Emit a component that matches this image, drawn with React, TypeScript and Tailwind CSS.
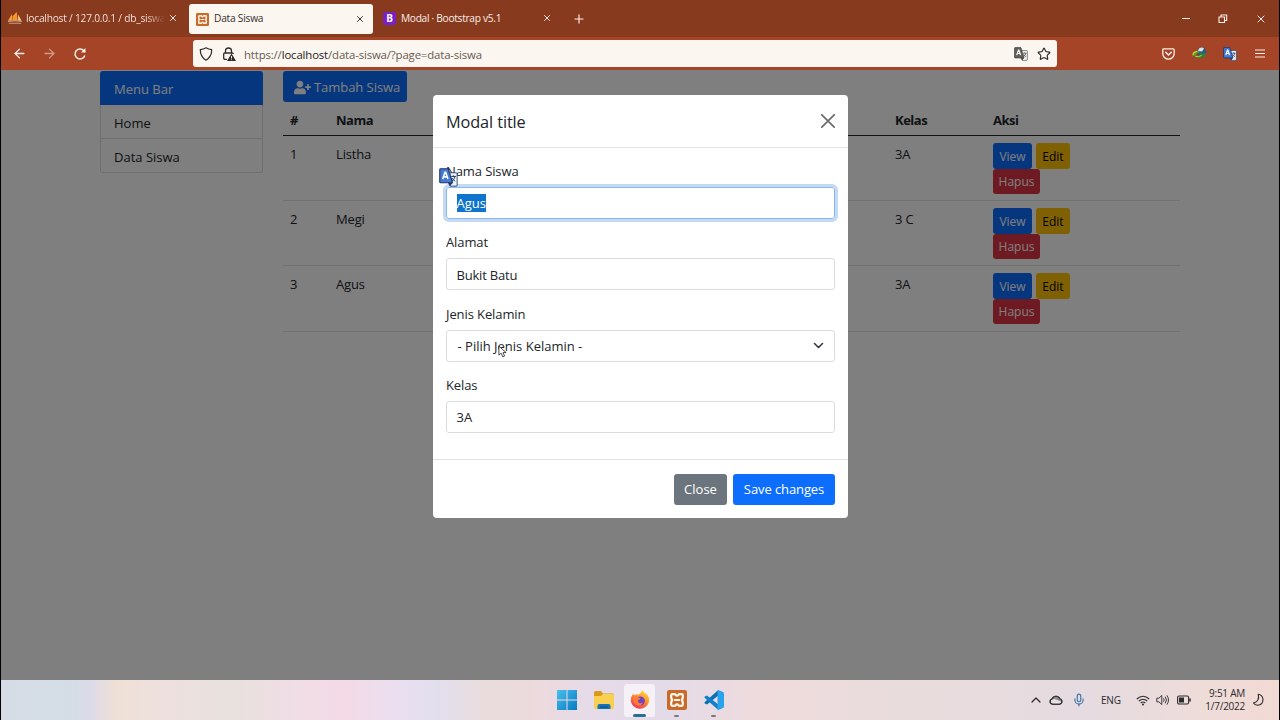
import React from 'react';
import { ArrowLeft, ArrowRight, ChevronUp, Mic, Minus, Plus, Star, X } from 'lucide-react';
import { FaUserPlus } from 'react-icons/fa';

const students = [
  { id: 1, name: 'Listha', kelas: '3A' },
  { id: 2, name: 'Megi', kelas: '3 C' },
  { id: 3, name: 'Agus', kelas: '3A' },
];

const XamppIcon: React.FC<{ className?: string }> = ({ className }) => (
  <svg viewBox="0 0 24 24" className={className} fill="none">
    <rect width="24" height="24" rx="2.5" fill="#c96a2b" />
    <path
      d="M6.5 5h2.7q1 0 1.2 1q1.6 1.6 3.2 0q.2-1 1.2-1h2.700q1.500 0 1.500 1.500v2.700q-1.800 2.800 0 5.600v2.700q0 1.500-1.500 1.500h-2.700q-1 0-1.200-1q-1.600-1.600-3.200 0q-.2 1-1.200 1h-2.700q-1.500 0-1.500-1.500v-2.700q1.800-2.800 0-5.600v-2.700q0-1.500 1.500-1.500z"
      stroke="#fff5e8"
      strokeWidth="2.700"
      strokeLinejoin="round"
    />
    <path d="M9 12h6" stroke="#fff5e8" strokeWidth="2.200" strokeLinecap="round" />
  </svg>
);

const TranslateIcon: React.FC<{ className?: string; main?: string; edge?: string }> = ({
  className,
  main = '#4479d4',
  edge = '#1c3566',
}) => (
  <svg viewBox="0 0 18 18" className={className} fill="none">
    <path d="M9 4.500h7.200q1 0 1 1v10.700q0 1-1 1h-5.700l-1.500-3z" fill="#eef1f4" stroke={edge} strokeWidth=".8" />
    <path d="M11.500 8h4.500M13.700 7v1M15.200 8q-.7 3-3 4.500M12.300 9.500q1 2 3 3" stroke={edge} strokeWidth=".9" />
    <path d="M1.500.8h7.300l4 13.200H1.500q-.8 0-.8-.8V1.600q0-.8.8-.8z" fill={main} stroke={edge} />
    <path d="M9 14l1.500 3.200l2.300-3.200z" fill={edge} />
    <path d="M3.500 10.500l2.200-6.500h.6l2.200 6.500M4.300 8.400h3.400" stroke="#fff" strokeWidth="1.500" />
  </svg>
);

const TabBar: React.FC = () => (
  <div className="flex h-[37px] shrink-0 items-center bg-[#883a1f] text-[#fbeee8]">
    <div className="flex w-[188px] items-center pl-[7px]">
      <svg viewBox="0 0 16 14" className="h-[14px] w-[14px] shrink-0">
        <path d="M0 10L4.500 2.500L5 10z" fill="#f3a13b" />
        <path d="M5.300 10V5L10 0L11 10z" fill="#f5952a" />
        <path d="M11.500 10V3L15.500 10z" fill="#f7c486" />
        <path d="M0 11q8-1.500 16 0M1 13h14" stroke="#d9b8a0" strokeWidth=".9" fill="none" />
      </svg>
      <span className="ml-1 w-[142px] whitespace-nowrap bg-linear-to-r from-[#fbeee8] from-85% to-[#883a1f] to-98% bg-clip-text text-[10.200px] tracking-[-0.230px] text-transparent">
        localhost / 127.0.0.1 / db_siswa
      </span>
      <X className="h-[10px] w-[10px] shrink-0" strokeWidth={2.300} />
    </div>
    <div className="mt-px flex h-[30px] w-[184px] items-center rounded-[3px] bg-[#fbf6f0] pl-[7px] pr-[8px] text-[#332f2d]">
      <XamppIcon className="h-[13px] w-[13px]" />
      <span className="ml-[5px] flex-1 text-[10.200px] tracking-[-0.230px]">Data Siswa</span>
      <X className="h-[10px] w-[10px]" strokeWidth={2.300} />
    </div>
    <div className="flex w-[186px] items-center pl-[10px] pr-[7px]">
      <span className="flex h-[13px] w-[13px] items-center justify-center rounded-[2px] bg-[#7b20c4] text-[10px] font-bold text-white">
        B
      </span>
      <span className="ml-[5px] flex-1 pt-px text-[10.200px] tracking-[-0.300px]">Modal · Bootstrap v5.1</span>
      <X className="h-[10px] w-[10px]" strokeWidth={2.300} />
    </div>
    <Plus className="ml-[13px] h-[14px] w-[14px]" strokeWidth={2} />
    <div className="ml-auto flex items-center gap-[27px] pr-[12px]">
      <svg viewBox="0 0 10 10" className="h-[10px] w-[10px]" stroke="currentColor">
        <path d="M1 4.500h8" />
      </svg>
      <svg viewBox="0 0 10 10" className="h-[10px] w-[10px]" fill="none" stroke="currentColor" strokeWidth="1.100">
        <path d="M1 3h5.500v5.500h-5.500zM3 3V1h5.700v5.500h-2.200" />
      </svg>
      <X className="h-[12px] w-[12px]" strokeWidth={2} />
    </div>
  </div>
);

const AddressBar: React.FC = () => (
  <div className="flex h-[33px] shrink-0 items-center bg-[#a54427] text-[#fbeee8]">
    <div className="flex w-[192px] items-center pl-[11px]">
      <ArrowLeft className="h-[15px] w-[15px]" strokeWidth={2.100} />
      <ArrowRight className="ml-[15px] h-[15px] w-[15px] opacity-50" strokeWidth={2.100} />
      <svg viewBox="0 0 14 14" className="ml-4 h-[14px] w-[14px]" fill="none" stroke="currentColor" strokeWidth="1.500">
        <path d="M11.800 8.500a5 5 0 1 1-.8-4.500l1 1" />
        <path d="M12.500 1v4.500h-4.500z" fill="currentColor" stroke="none" />
      </svg>
    </div>
    <div className="flex h-[27px] w-[864px] items-center rounded-[3px] bg-[#fbf6f0] pl-[6px] pr-[6px] text-[#2f2b29]">
      <svg viewBox="0 0 14 14" className="h-[14px] w-[14px]" fill="none" stroke="currentColor" strokeWidth="1.200">
        <path d="M7 .8Q9.500 2.300 12.700 2.600Q12.900 9.800 7 13.200Q1.100 9.800 1.300 2.600Q4.500 2.300 7 .8z" strokeLinejoin="round" />
      </svg>
      <svg viewBox="0 0 14 14" className="ml-[9px] h-[14px] w-[14px]" fill="none">
        <path d="M3.500 6V4a3 3 0 0 1 6 0v2M5 12.400H3q-1.300 0-1.300-1.300V7q0-1 1-1h7.500q1 0 1 1" stroke="currentColor" strokeWidth="1.300" />
        <path d="M9.500 6.500l4.500 7.500H5z" fill="currentColor" />
        <path d="M9.500 9v2.500M9.500 12.300v.8" stroke="#fff" strokeWidth=".9" />
      </svg>
      <span className="ml-[8px] flex-1 pt-[2px] text-[11.400px] tracking-[-0.150px] text-[#6a5a50]">
        https://<span className="text-[#1f1b19]">localhost</span>/data-siswa/?page=data-siswa
      </span>
      <TranslateIcon className="h-[14px] w-[14px]" main="#625f5c" edge="#4a4745" />
      <Star className="ml-[9px] h-[14px] w-[14px]" strokeWidth={2} />
    </div>
    <div className="ml-auto flex items-center pr-[14px]">
      <svg viewBox="0 0 13 12" className="h-[12px] w-[13px]" fill="none" stroke="currentColor" strokeWidth="1.300">
        <path d="M1.900.8h9.200q1.100 0 1.100 1.100v3.600a5.700 5.700 0 0 1-11.400 0V1.900Q.8.8 1.900.8z" />
        <path d="M3.700 4.300L6.500 7l2.800-2.700" strokeLinecap="round" strokeWidth="1.500" />
      </svg>
      <svg viewBox="0 0 15 13" className="ml-[17px] h-[13px] w-[15px]">
        <circle cx="9.700" cy="4.800" r="4.500" fill="#31597f" />
        <path d="M7 1.500Q10-.5 12 1.500L10 4.500L6 4z" fill="#d9e6e3" />
        <path d="M.5 9.500Q-.5 5 5.500 3.500l2.500 1.700q-5 1.300-4 3.300z" fill="#55a52b" />
        <path d="M1 7.800q0-2.600 4-3.500" stroke="#f2d53a" strokeWidth="1.100" fill="none" />
        <path d="M1 8.500q3 2.200 7.500-.3l-1.200-1.500l6.200-.7l-1.200 5l-1.500-1.300Q5.500 13.500 1 8.500z" fill="#228a30" />
        <path d="M3.500 9.500q3 1 6-1.200" stroke="#e8c83a" strokeWidth="1" fill="none" />
      </svg>
      <TranslateIcon className="ml-[16px] h-[14px] w-[14px]" />
      <svg viewBox="0 0 10 9" className="ml-[18px] h-[9px] w-[10px]" stroke="currentColor" strokeWidth="1.200">
        <path d="M0 1h10M0 4.500h10M0 8h10" />
      </svg>
    </div>
  </div>
);

const StudentPage: React.FC = () => (
  <div className="flex h-full bg-white pl-[99px] pr-[99px] pt-px text-[13px] leading-5 text-[#212529]">
    <div className="w-[163px] shrink-0">
      <div className="flex h-[34px] items-center rounded-t-[3px] bg-[#0d6efd] px-[14px] pt-[2px] text-white">Menu Bar</div>
      <div className="flex h-[34px] items-center border-x border-b border-[#dfdfdf] px-[13px] pt-[2px]">Home</div>
      <div className="flex h-[34px] items-center rounded-b-[3px] border-x border-b border-[#dfdfdf] px-[13px] pt-[2px]">
        Data Siswa
      </div>
    </div>
    <div className="ml-5 flex-1">
      <button className="flex h-[31px] w-[124px] items-center whitespace-nowrap rounded-[3px] bg-[#0d6efd] pl-[11px] pt-px tracking-[-0.050px] text-white">
        <FaUserPlus className="mr-[3px] h-[17px] w-[17px] shrink-0" />
        Tambah Siswa
      </button>
      <div className="flex h-[34px] items-center border-b border-[#212529] pt-[2px] font-bold tracking-[-0.500px]">
        <div className="w-[53px] pl-[7px]">#</div>
        <div className="w-[559px]">Nama</div>
        <div className="w-[98px]">Kelas</div>
        <div>Aksi</div>
      </div>
      {students.map((s) => (
        <div key={s.id} className="flex h-[65.200px] items-start border-b border-[#dee2e6] pt-[7px] tracking-[-0.150px]">
          <div className="w-[53px] pl-[7px] pt-px">{s.id}</div>
          <div className="w-[559px] pt-px">{s.name}</div>
          <div className="w-[98px] pt-px">{s.kelas}</div>
          <div className="flex w-[90px] flex-wrap gap-x-1 text-[12px] leading-[25px] tracking-normal">
            <button className="h-[25.500px] w-[39px] rounded-[3px] bg-[#0d6efd] pt-px text-white">View</button>
            <button className="h-[25.500px] w-[34px] rounded-[3px] bg-[#ffc107] pt-px text-black">Edit</button>
            <button className="h-[25.500px] w-[47px] rounded-[3px] bg-[#dc3545] text-white">Hapus</button>
          </div>
        </div>
      ))}
    </div>
  </div>
);

const Field: React.FC<{ label: string; children: React.ReactNode; focused?: boolean }> = ({ label, children, focused }) => (
  <div className="mb-[13.600px] flex flex-col gap-[6px]">
    <label className="leading-5 tracking-[-0.100px]">{label}</label>
    <div
      className={
        focused
          ? 'flex h-[31.800px] items-center rounded-[3px] border border-[#86b7fe] px-[9.500px] pt-px ring-[3px] ring-[#c5daf0]'
          : 'flex h-[31.800px] items-center rounded-[3px] border border-[#d9dde1] px-[9.500px] pt-[2px]'
      }
    >
      {children}
    </div>
  </div>
);

const StudentModal: React.FC = () => (
  <div className="absolute left-[432px] top-[25px] flex h-[423px] w-[415px] flex-col rounded-[4px] bg-white text-[13px] text-[#212529]">
    <div className="flex h-[52.500px] items-center justify-between border-b border-[#e3e6e9] px-[13px]">
      <h5 className="pt-[2px] text-[16.300px] tracking-[-0.100px]">Modal title</h5>
      <svg viewBox="0 0 14 14" className="h-[14px] w-[14px]" stroke="#6c6c6c" strokeWidth="1.700">
        <path d="M.8.800l12.400 12.400M13.200.800L.8 13.200" strokeLinecap="round" />
      </svg>
    </div>
    <div className="flex-1 px-[13px] pt-[13.500px]">
      <Field label="Nama Siswa" focused>
        <span className="bg-[#0f75cc] leading-[18px] text-white">Agus</span>
      </Field>
      <Field label="Alamat">
        <span className="tracking-[-0.200px]">Bukit Batu</span>
      </Field>
      <Field label="Jenis Kelamin">
        <span className="flex-1 pl-px">- Pilih Jenis Kelamin -</span>
        <svg viewBox="0 0 11 8" className="mb-px mr-px h-[8px] w-[11px]" fill="none" stroke="#343a40" strokeWidth="1.600">
          <path d="M1.500 1.500l4 4l4-4" strokeLinecap="round" strokeLinejoin="round" />
        </svg>
      </Field>
      <Field label="Kelas">3A</Field>
    </div>
    <div className="flex h-[59px] items-center justify-end gap-[6px] border-t border-[#dee2e6] pr-[13px]">
      <button className="h-[31px] w-[53px] rounded-[3px] bg-[#6c757d] pt-[2px] text-white">Close</button>
      <button className="h-[31px] w-[102px] rounded-[3px] bg-[#0d6efd] pt-[2px] tracking-[-0.100px] text-white">
        Save changes
      </button>
    </div>
    <TranslateIcon className="absolute left-[6px] top-[73px] h-[19px] w-[19px]" />
    <svg viewBox="0 0 10 14" className="absolute left-[65px] top-[250px] h-[13px] w-[9px]">
      <path d="M1 1v10l2.500-2.200L5.300 13l2-.9L5.600 8.200H9z" fill="#fff" stroke="#222" strokeWidth=".9" />
    </svg>
  </div>
);

const Taskbar: React.FC = () => (
  <div className="flex h-10 shrink-0 items-center bg-[linear-gradient(90deg,#d6dce6_0%,#d4dde5_5.5%,#dcdae8_7%,#efe0d6_9%,#ede0de_13%,#e8e1dd_18%,#f0dde6_23%,#f3dae6_27%,#eadff0_31%,#e2dfee_34%,#e9dcdc_38%,#ecdadd_42%,#e6dbe8_46%,#e4dbe8_52%,#efdbdc_60%,#e9dcdc_70%,#e5dbe0_85%,#efdcd8_95%,#f2d9d4_100%)]">
    <div className="ml-[550px] flex h-full items-center">
      <div className="flex w-[32px] justify-center">
        <svg viewBox="0 0 20 20" className="h-5 w-5">
          <defs>
            <linearGradient id="win" x1="0" y1="0" x2="1" y2="1">
              <stop stopColor="#48c0ea" />
              <stop offset="1" stopColor="#0879c4" />
            </linearGradient>
          </defs>
          <path d="M0 0h9.500v9.500H0zM10.500 0H20v9.500h-9.500zM0 10.500h9.500V20H0zM10.500 10.500H20V20h-9.500z" fill="url(#win)" />
        </svg>
      </div>
      <div className="ml-[5px] flex w-[32px] justify-center">
        <svg viewBox="0 0 20 18" className="h-[18px] w-5">
          <path d="M0 1.500Q0 0 1.500 0H7l2 2.500h9.500Q20 2.500 20 4v5H0z" fill="#d99a1c" />
          <path d="M0 5h7l2-2h10q1 0 1 1v13q0 1-1 1H1q-1 0-1-1z" fill="#fad052" />
          <path d="M3.500 18v-3q0-2 2-2h9q2 0 2 2v3z" fill="#1673b5" />
          <path d="M6 16h8" stroke="#0c548c" strokeWidth="1.300" />
        </svg>
      </div>
      <div className="ml-[4px] flex h-[33px] w-[31px] flex-col items-center justify-between rounded-[3px] bg-white/60 pt-[6px]">
        <svg viewBox="0 0 20 20" className="h-[20px] w-[20px]">
          <defs>
            <linearGradient id="fox" x1=".8" y1="0" x2=".2" y2="1">
              <stop stopColor="#ffe141" />
              <stop offset=".45" stopColor="#ff9128" />
              <stop offset="1" stopColor="#ec285f" />
            </linearGradient>
          </defs>
          <path
            d="M12.500 0q.8 2.400 3 4q.2-.8-.2-1.600Q19.500 6 19.200 11A9.300 9.200 0 0 1 .8 11Q.6 6.500 3.300 3.500q.1 1 .7 1.700Q6 4 8 4.700Q11 3.500 12.500 0z"
            fill="url(#fox)"
          />
          <circle cx="10.300" cy="11" r="4.600" fill="#7442c4" />
          <path d="M3.500 6.500q3-.8 5 1l2 .8q-.4 1.500-2.500 1.700q-.8 2 1.300 2.900q2 .7 3.700-.5q-1.700 4-6 2.800q-3.500-1.300-3.500-5z" fill="#ff7a38" />
        </svg>
        <span className="h-[3px] w-[13px] rounded-full bg-[#28708f]" />
      </div>
      <div className="ml-[6px] flex h-[33px] w-[31px] flex-col items-center justify-between pt-[6px]">
        <XamppIcon className="h-5 w-5" />
        <span className="h-[2px] w-[5px] rounded-full bg-[#7b7b80]" />
      </div>
      <div className="ml-[6px] flex h-[33px] w-[31px] flex-col items-center justify-between pt-[6px]">
        <svg viewBox="0 0 20 20" className="h-5 w-5">
          <path d="M14.300 0v5.500L3 14.500L.8 13.500q-.8-.7 0-1.500z" fill="#0871b8" />
          <path d="M.8 8q-.8-.8 0-1.500L3 5.500l11.300 9V20z" fill="#137fc9" />
          <path d="M14.300 0L19 2q1 .5 1 1.500v13q0 1-1 1.500l-4.700 2q-.8-.2-.8-1.200V1.200q0-1 .8-1.200z" fill="#2aa3ec" />
        </svg>
        <span className="h-[2px] w-[5px] rounded-full bg-[#7b7b80]" />
      </div>
    </div>
    <div className="ml-auto flex items-center pr-[14px] text-[#2a2a2d]">
      <ChevronUp className="h-[16px] w-[16px]" strokeWidth={1.800} />
      <svg viewBox="0 0 14 10" className="ml-[5px] h-[10px] w-[14px]" stroke="#333" strokeWidth="1.100">
        <path d="M3.500 9.200a2.800 2.800 0 0 1-.2-5.500a4 4 0 0 1 7.400 0a2.800 2.800 0 0 1-.2 5.500z" fill="#e4e0e2" />
        <path d="M1.800 4.800Q5 3 8 5l4.500 1.500Q12 2.500 10 3Q7-1 3.500 3.500z" fill="#8d8d90" stroke="none" />
        <path d="M3.500 9.200a2.800 2.800 0 0 1-.2-5.500a4 4 0 0 1 7.400 0a2.800 2.800 0 0 1-.2 5.500z" fill="none" />
      </svg>
      <Mic className="ml-[9px] h-[14px] w-[14px] text-[#3e74ac]" strokeWidth={2} />
      <span className="ml-[15px] w-[20px] text-[10px] tracking-[-0.200px]">ENG</span>
      <svg viewBox="0 0 14 11" className="ml-[15px] h-[11px] w-[14px]" fill="none" stroke="currentColor" strokeWidth="1.100">
        <path d="M.8 4q6.200-5.500 12.400 0M2.800 6q4.200-3.600 8.400 0M4.700 8q2.300-1.900 4.600 0" />
        <circle cx="7" cy="9.500" r="1" fill="currentColor" stroke="none" />
      </svg>
      <svg viewBox="0 0 13 12" className="ml-[6px] h-[12px] w-[13px]" fill="none" stroke="currentColor" strokeWidth=".9">
        <path d="M.8 4.200h2L5.800 1.500v9L2.800 7.800h-2zM7.500 4.200q1.500 1.800 0 3.600M9.200 2.700q2.600 3.300 0 6.600M10.900 1.300q3.200 4.700 0 9.400" />
      </svg>
      <svg viewBox="0 0 14 10" className="ml-[8px] h-[10px] w-[14px]" fill="none" stroke="currentColor" strokeWidth="1.100">
        <rect x=".6" y="1" width="11" height="8" rx="1.500" />
        <path d="M2 2.500h5v5H2z" fill="currentColor" stroke="none" />
        <path d="M13 3.500v3" strokeWidth="1.500" />
      </svg>
      <div className="ml-[12px] w-[42px] whitespace-nowrap text-right text-[10px] leading-[13px] tracking-[-0.250px]">
        <div>9:51 AM</div>
        <div>1/7/2022</div>
      </div>
      <svg viewBox="0 0 13 14" className="ml-[7px] h-[14px] w-[13px]" fill="none" stroke="currentColor" strokeWidth="1.100">
        <path d="M6.300 1.200Q10.500 2 11 6.200Q11 12 5.500 12.300Q2.800 12 1.500 10Q7.800 8.500 6.300 1.200z" strokeLinejoin="round" />
      </svg>
    </div>
  </div>
);

const App: React.FC = () => (
  <div className="flex h-[720px] w-[1280px] flex-col overflow-hidden border-x border-black bg-white font-['Open_Sans','Noto_Sans',sans-serif]">
    <TabBar />
    <AddressBar />
    <div className="relative h-[610px] shrink-0">
      <StudentPage />
      <div className="absolute inset-0 bg-black/50" />
      <StudentModal />
    </div>
    <Taskbar />
  </div>
);

export default App;
